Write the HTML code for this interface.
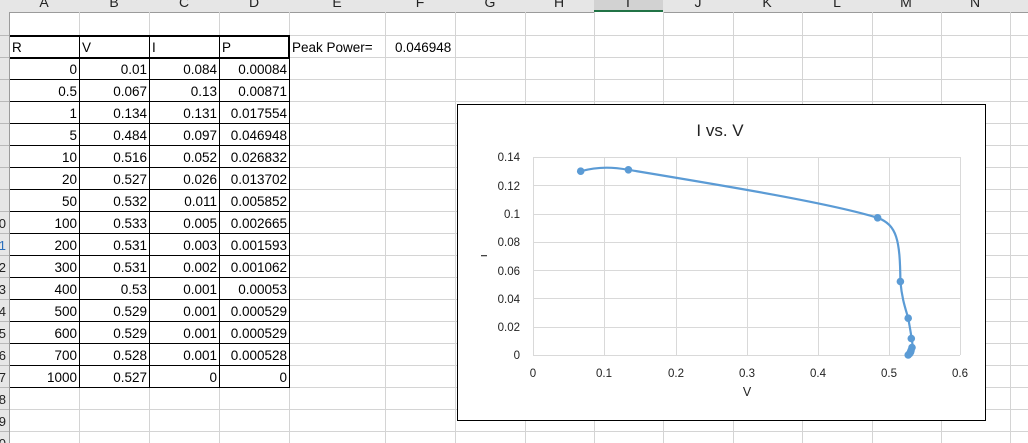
<!DOCTYPE html>
<html><head><meta charset="utf-8"><style>
html,body{margin:0;padding:0;background:#fff;}
svg{display:block;font-family:"Liberation Sans",Arial,sans-serif;}
</style></head><body>
<svg width="1028" height="443" viewBox="0 0 1028 443" xmlns="http://www.w3.org/2000/svg">
<rect width="1028" height="443" fill="#fff"/>
<rect x="0" y="0" width="1028" height="12" fill="#e6e6e6"/>
<rect x="594" y="0" width="69" height="12" fill="#d2d2d2"/>
<rect x="594" y="10" width="69" height="2" fill="#217346"/>
<line x1="0" y1="12.5" x2="594" y2="12.5" stroke="#9b9b9b"/>
<line x1="663" y1="12.5" x2="1028" y2="12.5" stroke="#9b9b9b"/>
<rect x="0" y="12" width="9" height="431" fill="#e6e6e6"/>
<line x1="9.5" y1="12" x2="9.5" y2="443" stroke="#9b9b9b"/>
<g font-size="14" fill="#222" text-anchor="middle">
<text x="44" y="7">A</text><text x="114" y="7">B</text><text x="184" y="7">C</text><text x="254" y="7">D</text>
<text x="337" y="7">E</text><text x="420" y="7">F</text><text x="490" y="7">G</text><text x="559" y="7">H</text>
<text x="628" y="7">I</text><text x="698" y="7">J</text><text x="767" y="7">K</text><text x="837" y="7">L</text>
<text x="906" y="7">M</text><text x="975" y="7">N</text>
</g>
<g font-size="13" fill="#222" text-anchor="end">
<text x="6" y="228">0</text><text x="6" y="250" fill="#2a6ebb">1</text><text x="6" y="272">2</text><text x="6" y="294">3</text>
<text x="6" y="316">4</text><text x="6" y="338">5</text><text x="6" y="360">6</text><text x="6" y="382">7</text>
<text x="6" y="404">8</text><text x="6" y="426">9</text><text x="6" y="448">0</text>
</g>
<g stroke="#d4d4d4" stroke-width="1">
<line x1="79.5" y1="12" x2="79.5" y2="443"/><line x1="149.5" y1="12" x2="149.5" y2="443"/>
<line x1="219.5" y1="12" x2="219.5" y2="443"/><line x1="289.5" y1="12" x2="289.5" y2="443"/>
<line x1="385.5" y1="12" x2="385.5" y2="443"/><line x1="455.5" y1="12" x2="455.5" y2="443"/>
<line x1="525.5" y1="12" x2="525.5" y2="443"/><line x1="594.5" y1="12" x2="594.5" y2="443"/>
<line x1="663.5" y1="12" x2="663.5" y2="443"/><line x1="733.5" y1="12" x2="733.5" y2="443"/>
<line x1="802.5" y1="12" x2="802.5" y2="443"/><line x1="872.5" y1="12" x2="872.5" y2="443"/>
<line x1="941.5" y1="12" x2="941.5" y2="443"/><line x1="1010.5" y1="12" x2="1010.5" y2="443"/>
<line x1="10" y1="35.5" x2="1028" y2="35.5"/><line x1="10" y1="57.5" x2="1028" y2="57.5"/>
<line x1="10" y1="79.5" x2="1028" y2="79.5"/><line x1="10" y1="101.5" x2="1028" y2="101.5"/>
<line x1="10" y1="123.5" x2="1028" y2="123.5"/><line x1="10" y1="145.5" x2="1028" y2="145.5"/>
<line x1="10" y1="167.5" x2="1028" y2="167.5"/><line x1="10" y1="189.5" x2="1028" y2="189.5"/>
<line x1="10" y1="211.5" x2="1028" y2="211.5"/><line x1="10" y1="233.5" x2="1028" y2="233.5"/>
<line x1="10" y1="255.5" x2="1028" y2="255.5"/><line x1="10" y1="277.5" x2="1028" y2="277.5"/>
<line x1="10" y1="299.5" x2="1028" y2="299.5"/><line x1="10" y1="321.5" x2="1028" y2="321.5"/>
<line x1="10" y1="343.5" x2="1028" y2="343.5"/><line x1="10" y1="365.5" x2="1028" y2="365.5"/>
<line x1="10" y1="387.5" x2="1028" y2="387.5"/><line x1="10" y1="409.5" x2="1028" y2="409.5"/>
<line x1="10" y1="431.5" x2="1028" y2="431.5"/>
</g>
<g stroke="#b8b8b8"><line x1="0" y1="35.5" x2="9" y2="35.5"/><line x1="0" y1="57.5" x2="9" y2="57.5"/><line x1="0" y1="79.5" x2="9" y2="79.5"/><line x1="0" y1="101.5" x2="9" y2="101.5"/><line x1="0" y1="123.5" x2="9" y2="123.5"/><line x1="0" y1="145.5" x2="9" y2="145.5"/><line x1="0" y1="167.5" x2="9" y2="167.5"/><line x1="0" y1="189.5" x2="9" y2="189.5"/><line x1="0" y1="211.5" x2="9" y2="211.5"/><line x1="0" y1="233.5" x2="9" y2="233.5"/><line x1="0" y1="255.5" x2="9" y2="255.5"/><line x1="0" y1="277.5" x2="9" y2="277.5"/><line x1="0" y1="299.5" x2="9" y2="299.5"/><line x1="0" y1="321.5" x2="9" y2="321.5"/><line x1="0" y1="343.5" x2="9" y2="343.5"/><line x1="0" y1="365.5" x2="9" y2="365.5"/><line x1="0" y1="387.5" x2="9" y2="387.5"/><line x1="0" y1="409.5" x2="9" y2="409.5"/><line x1="0" y1="431.5" x2="9" y2="431.5"/></g>
<g stroke="#000" stroke-width="1">
<line x1="79.5" y1="35" x2="79.5" y2="388"/><line x1="149.5" y1="35" x2="149.5" y2="388"/><line x1="219.5" y1="35" x2="219.5" y2="388"/>
<line x1="10" y1="79.5" x2="289" y2="79.5"/><line x1="10" y1="101.5" x2="289" y2="101.5"/><line x1="10" y1="123.5" x2="289" y2="123.5"/>
<line x1="10" y1="145.5" x2="289" y2="145.5"/><line x1="10" y1="167.5" x2="289" y2="167.5"/><line x1="10" y1="189.5" x2="289" y2="189.5"/>
<line x1="10" y1="211.5" x2="289" y2="211.5"/><line x1="10" y1="233.5" x2="289" y2="233.5"/><line x1="10" y1="255.5" x2="289" y2="255.5"/>
<line x1="10" y1="277.5" x2="289" y2="277.5"/><line x1="10" y1="299.5" x2="289" y2="299.5"/><line x1="10" y1="321.5" x2="289" y2="321.5"/>
<line x1="10" y1="343.5" x2="289" y2="343.5"/><line x1="10" y1="365.5" x2="289" y2="365.5"/><line x1="10" y1="387.5" x2="289" y2="387.5"/>
<line x1="289.5" y1="58" x2="289.5" y2="388"/>
</g>
<rect x="10" y="35" width="280" height="2" fill="#000"/>
<rect x="10" y="57" width="280" height="2" fill="#000"/>
<rect x="288" y="35" width="2" height="24" fill="#000"/>
<g font-size="13.5" fill="#000">
<text x="12" y="52">R</text><text x="82" y="52">V</text><text x="152" y="52">I</text><text x="222" y="52">P</text>
<text x="292" y="52">Peak Power=</text><text x="395" y="52">0.046948</text>
</g>
<g font-size="13.5" fill="#000" text-anchor="end">
<text x="77" y="74">0</text><text x="147" y="74">0.01</text><text x="217" y="74">0.084</text><text x="287" y="74">0.00084</text>
<text x="77" y="96">0.5</text><text x="147" y="96">0.067</text><text x="217" y="96">0.13</text><text x="287" y="96">0.00871</text>
<text x="77" y="118">1</text><text x="147" y="118">0.134</text><text x="217" y="118">0.131</text><text x="287" y="118">0.017554</text>
<text x="77" y="140">5</text><text x="147" y="140">0.484</text><text x="217" y="140">0.097</text><text x="287" y="140">0.046948</text>
<text x="77" y="162">10</text><text x="147" y="162">0.516</text><text x="217" y="162">0.052</text><text x="287" y="162">0.026832</text>
<text x="77" y="184">20</text><text x="147" y="184">0.527</text><text x="217" y="184">0.026</text><text x="287" y="184">0.013702</text>
<text x="77" y="206">50</text><text x="147" y="206">0.532</text><text x="217" y="206">0.011</text><text x="287" y="206">0.005852</text>
<text x="77" y="228">100</text><text x="147" y="228">0.533</text><text x="217" y="228">0.005</text><text x="287" y="228">0.002665</text>
<text x="77" y="250">200</text><text x="147" y="250">0.531</text><text x="217" y="250">0.003</text><text x="287" y="250">0.001593</text>
<text x="77" y="272">300</text><text x="147" y="272">0.531</text><text x="217" y="272">0.002</text><text x="287" y="272">0.001062</text>
<text x="77" y="294">400</text><text x="147" y="294">0.53</text><text x="217" y="294">0.001</text><text x="287" y="294">0.00053</text>
<text x="77" y="316">500</text><text x="147" y="316">0.529</text><text x="217" y="316">0.001</text><text x="287" y="316">0.000529</text>
<text x="77" y="338">600</text><text x="147" y="338">0.529</text><text x="217" y="338">0.001</text><text x="287" y="338">0.000529</text>
<text x="77" y="360">700</text><text x="147" y="360">0.528</text><text x="217" y="360">0.001</text><text x="287" y="360">0.000528</text>
<text x="77" y="382">1000</text><text x="147" y="382">0.527</text><text x="217" y="382">0</text><text x="287" y="382">0</text>
</g>
<rect x="457.5" y="104.5" width="528" height="316" fill="#fff" stroke="#000" stroke-width="1"/>
<g stroke="#d9d9d9" stroke-width="1">
<line x1="533" y1="157.5" x2="960" y2="157.5"/><line x1="533" y1="185.5" x2="960" y2="185.5"/>
<line x1="533" y1="214.5" x2="960" y2="214.5"/><line x1="533" y1="242.5" x2="960" y2="242.5"/>
<line x1="533" y1="270.5" x2="960" y2="270.5"/><line x1="533" y1="298.5" x2="960" y2="298.5"/>
<line x1="533" y1="327.5" x2="960" y2="327.5"/><line x1="533" y1="355.5" x2="960" y2="355.5"/>
<line x1="533.5" y1="157" x2="533.5" y2="355"/><line x1="604.5" y1="157" x2="604.5" y2="355"/>
<line x1="676.5" y1="157" x2="676.5" y2="355"/><line x1="747.5" y1="157" x2="747.5" y2="355"/>
<line x1="818.5" y1="157" x2="818.5" y2="355"/><line x1="889.5" y1="157" x2="889.5" y2="355"/>
<line x1="960.5" y1="157" x2="960.5" y2="355"/>
</g>
<text x="720" y="136" font-size="17" fill="#222" text-anchor="middle">I vs. V</text>
<g font-size="11.5" fill="#222" text-anchor="end">
<text x="520" y="161">0.14</text><text x="520" y="190">0.12</text><text x="520" y="218">0.1</text>
<text x="520" y="246">0.08</text><text x="520" y="275">0.06</text><text x="520" y="303">0.04</text>
<text x="520" y="331">0.02</text><text x="520" y="359">0</text>
</g>
<g font-size="11.5" fill="#222" text-anchor="middle">
<text x="533" y="377">0</text><text x="604" y="377">0.1</text><text x="676" y="377">0.2</text><text x="747" y="377">0.3</text>
<text x="818" y="377">0.4</text><text x="889" y="377">0.5</text><text x="960" y="377">0.6</text>
<text x="747" y="396" font-size="12.5">V</text>
</g>
<rect x="481" y="255" width="6" height="1.3" fill="#444"/>
<path d="M580.7,171.2 C600,166 615,167.5 628.4,169.8 C720,185 830,203 877.6,217.8 C897,225 900,240 900.4,281.5 C902,300 906,310 908.2,318.2 C910,328 911,334 911.8,339.4 C912.5,344 912.6,347 912.5,347.9 C912,350 911.2,351 911.1,352.2 C910.6,353 909,354 908.2,355" fill="none" stroke="#5b9bd5" stroke-width="2.2"/>
<g fill="#5b9bd5">
<circle cx="580.7" cy="171.2" r="3.8"/><circle cx="628.4" cy="169.8" r="3.8"/><circle cx="877.6" cy="217.8" r="3.8"/>
<circle cx="900.4" cy="281.5" r="3.8"/><circle cx="908.2" cy="318.2" r="3.8"/><circle cx="911.3" cy="338.5" r="3.8"/>
<circle cx="912" cy="347.5" r="3.8"/><circle cx="911" cy="350.5" r="3.8"/><circle cx="910.5" cy="352.2" r="3.8"/>
<circle cx="909.6" cy="353.6" r="3.8"/><circle cx="908.2" cy="355" r="3.8"/>
</g>
</svg>
</body></html>
